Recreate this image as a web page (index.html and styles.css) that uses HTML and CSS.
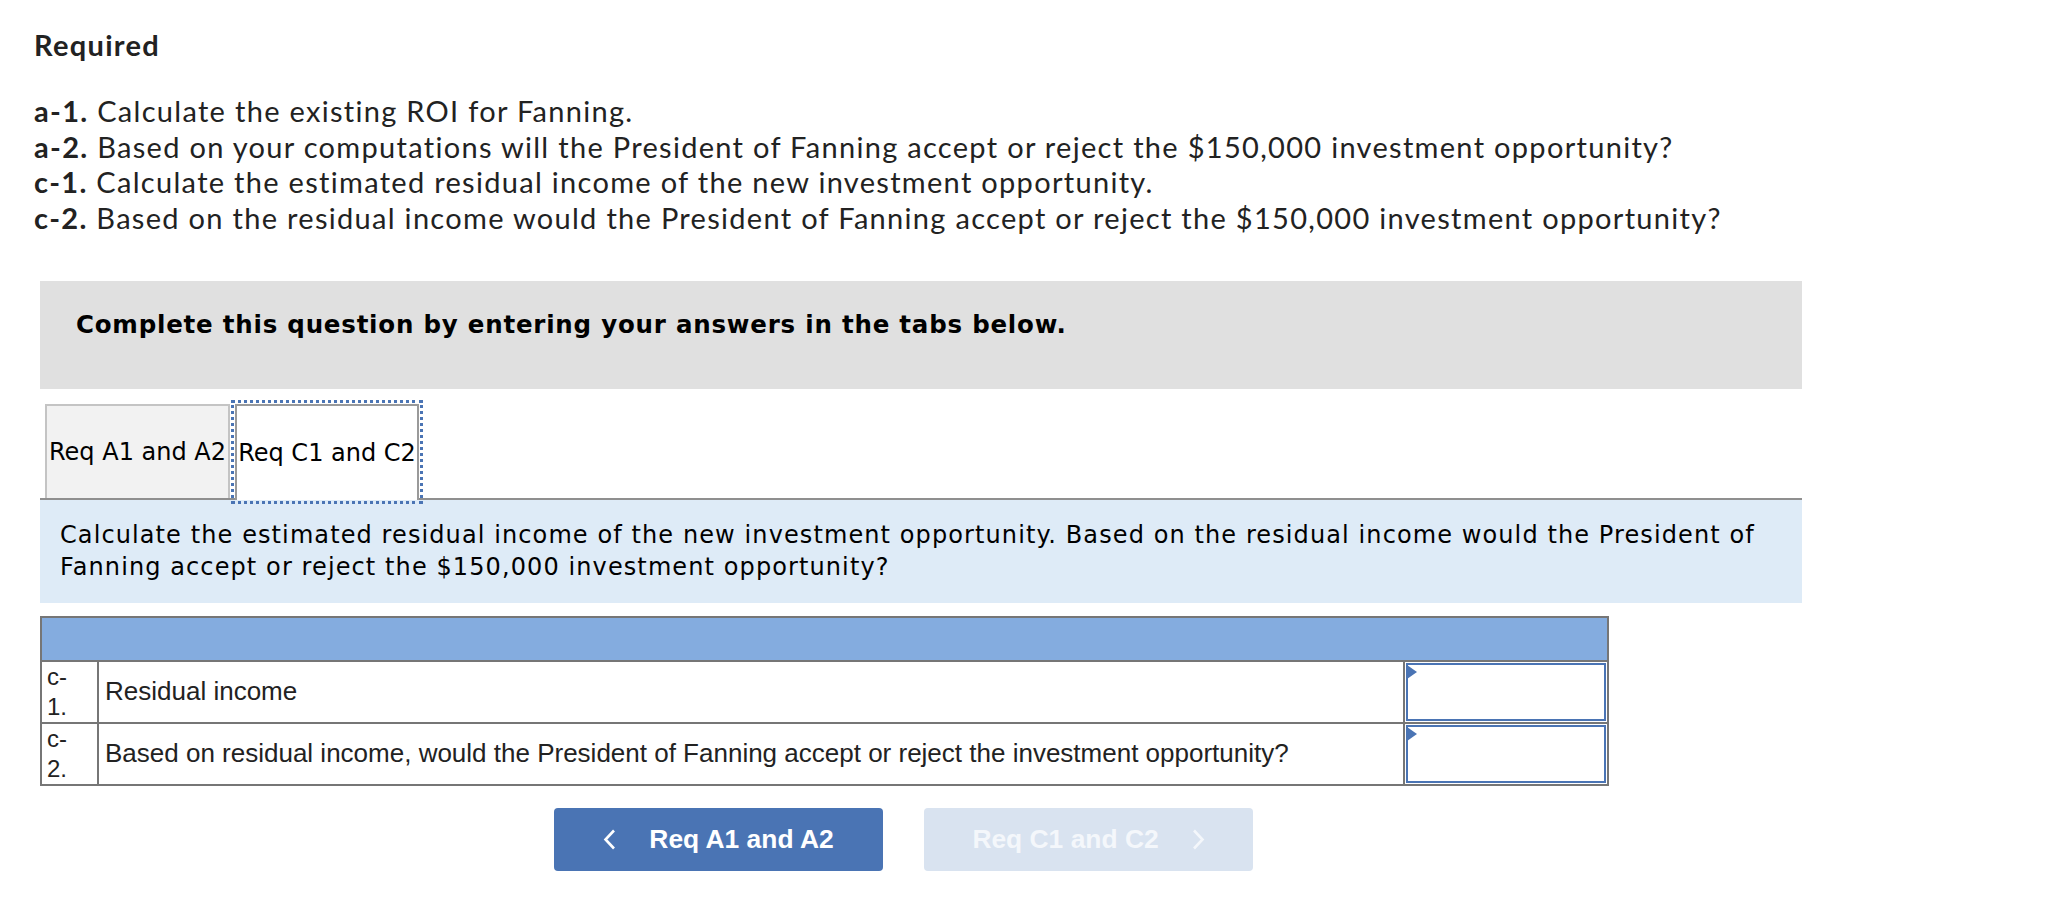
FILE: index.html
```html
<!DOCTYPE html>
<html lang="en">
<head>
<meta charset="utf-8">
<title>Required</title>
<link rel="stylesheet" href="styles.css">
</head>
<body>
<div class="intro">
  <h2 class="required">Required</h2>
  <div class="reqs">
    <p><b>a-1.</b> Calculate the existing ROI for Fanning.</p>
    <p><b>a-2.</b> Based on your computations will the President of Fanning accept or reject the $150,000 investment opportunity?</p>
    <p><b>c-1.</b> Calculate the estimated residual income of the new investment opportunity.</p>
    <p><b>c-2.</b> Based on the residual income would the President of Fanning accept or reject the $150,000 investment opportunity?</p>
  </div>
</div>
<div class="panel">
  <div class="instructions">Complete this question by entering your answers in the tabs below.</div>
  <div class="tabs">
    <div class="tab">Req A1 and A2</div>
    <div class="tab active">Req C1 and C2</div>
  </div>
  <div class="question">Calculate the estimated residual income of the new investment opportunity. Based on the residual income would the President of<br>Fanning accept or reject the $150,000 investment opportunity?</div>
  <table class="answers">
    <tr class="head"><td colspan="3"></td></tr>
    <tr>
      <td class="num">c-<br>1.</td>
      <td class="label">Residual income</td>
      <td class="entry"><div class="input"><span class="flag"></span></div></td>
    </tr>
    <tr>
      <td class="num">c-<br>2.</td>
      <td class="label">Based on residual income, would the President of Fanning accept or reject the investment opportunity?</td>
      <td class="entry"><div class="input"><span class="flag"></span></div></td>
    </tr>
  </table>
  <div class="nav">
    <button class="btn prev"><svg class="chev" width="13" height="21" viewBox="0 0 13 21"><path d="M11 1.5 L2.5 10.5 L11 19.5" fill="none" stroke="currentColor" stroke-width="2.6"/></svg><span>Req A1 and A2</span></button>
    <button class="btn next" disabled><span>Req C1 and C2</span><svg class="chev" width="13" height="21" viewBox="0 0 13 21"><path d="M2 1.5 L10.5 10.5 L2 19.5" fill="none" stroke="currentColor" stroke-width="2.6"/></svg></button>
  </div>
</div>
</body>
</html>
```

FILE: styles.css
```css
html, body {
  margin: 0;
  padding: 0;
  background: #ffffff;
}

.intro {
  padding: 27px 0 0 34px;
  font-family: Lato, "Open Sans", sans-serif;
  color: #222222;
  font-size: 29px;
  letter-spacing: 1.3px;
}

.required {
  margin: 0;
  font-size: 29px;
  line-height: 36px;
  font-weight: 700;
}

.reqs {
  margin-top: 30px;
}

.reqs p {
  margin: 0;
  line-height: 35.7px;
}

.reqs b {
  font-weight: 700;
}

.panel {
  margin: 45px 0 0 40px;
  width: 1762px;
}

.instructions {
  height: 108px;
  box-sizing: border-box;
  background: #e0e0e0;
  padding: 29px 0 0 36px;
  font-family: "DejaVu Sans", Verdana, sans-serif;
  font-weight: 700;
  font-size: 24.5px;
  letter-spacing: 0.78px;
  line-height: 30px;
  color: #000000;
}

.tabs {
  display: flex;
  margin-top: 15px;
  height: 94px;
  border-bottom: 2px solid #8f8f8f;
  padding-left: 5px;
}

.tab {
  box-sizing: border-box;
  width: 185px;
  height: 94px;
  display: flex;
  align-items: center;
  justify-content: center;
  font-family: "DejaVu Sans", Verdana, sans-serif;
  font-size: 24px;
  color: #000000;
  background: #f2f2f2;
  border: 2px solid #c4c4c4;
  border-bottom: none;
  white-space: nowrap;
}

.tab.active {
  margin-left: 5px;
  width: 184px;
  background: #ffffff;
  border-color: #9a9a9a;
  outline: 3px dotted #4a74b4;
  outline-offset: 1px;
  height: 96px;
  margin-bottom: -2px;
}

.question {
  height: 103px;
  box-sizing: border-box;
  background: #deebf7;
  padding: 19px 0 0 20px;
  font-family: "DejaVu Sans", Verdana, sans-serif;
  font-size: 24px;
  letter-spacing: 1.1px;
  line-height: 32px;
  color: #000000;
}

.answers {
  margin-top: 13px;
  border-collapse: collapse;
  width: 1569px;
  font-family: "Liberation Sans", Arial, sans-serif;
  color: #222222;
}

.answers td {
  border: 2px solid #767676;
  padding: 0;
}

.answers .head td {
  height: 42px;
  background: #84acdf;
}

.answers .num {
  width: 50px;
  height: 58px;
  vertical-align: top;
  font-size: 24px;
  line-height: 30px;
  padding-left: 5px;
}

.answers .label {
  font-size: 26px;
  padding-left: 6px;
  vertical-align: middle;
}

.answers .entry {
  width: 200px;
  padding: 1px;
}

.input {
  position: relative;
  box-sizing: border-box;
  height: 58px;
  border: 2px solid #4a74b4;
  background: #ffffff;
}

.flag {
  position: absolute;
  left: -1px;
  top: 0;
  width: 0;
  height: 0;
  border-top: 7px solid transparent;
  border-bottom: 7px solid transparent;
  border-left: 10px solid #4a74b4;
}

.nav {
  display: flex;
  gap: 41px;
  margin-top: 22px;
  padding-left: 514px;
}

.btn {
  width: 329px;
  height: 63px;
  border: none;
  border-radius: 4px;
  display: flex;
  align-items: center;
  justify-content: center;
  gap: 33px;
  font-family: "Liberation Sans", Arial, sans-serif;
  font-weight: 700;
  font-size: 26.4px;
  padding: 0;
}

.btn.prev {
  background: #4a74b4;
  color: #ffffff;
}

.btn.next {
  background: #d9e3f0;
  color: #f4f7fb;
}

.chev {
  display: block;
}
```
